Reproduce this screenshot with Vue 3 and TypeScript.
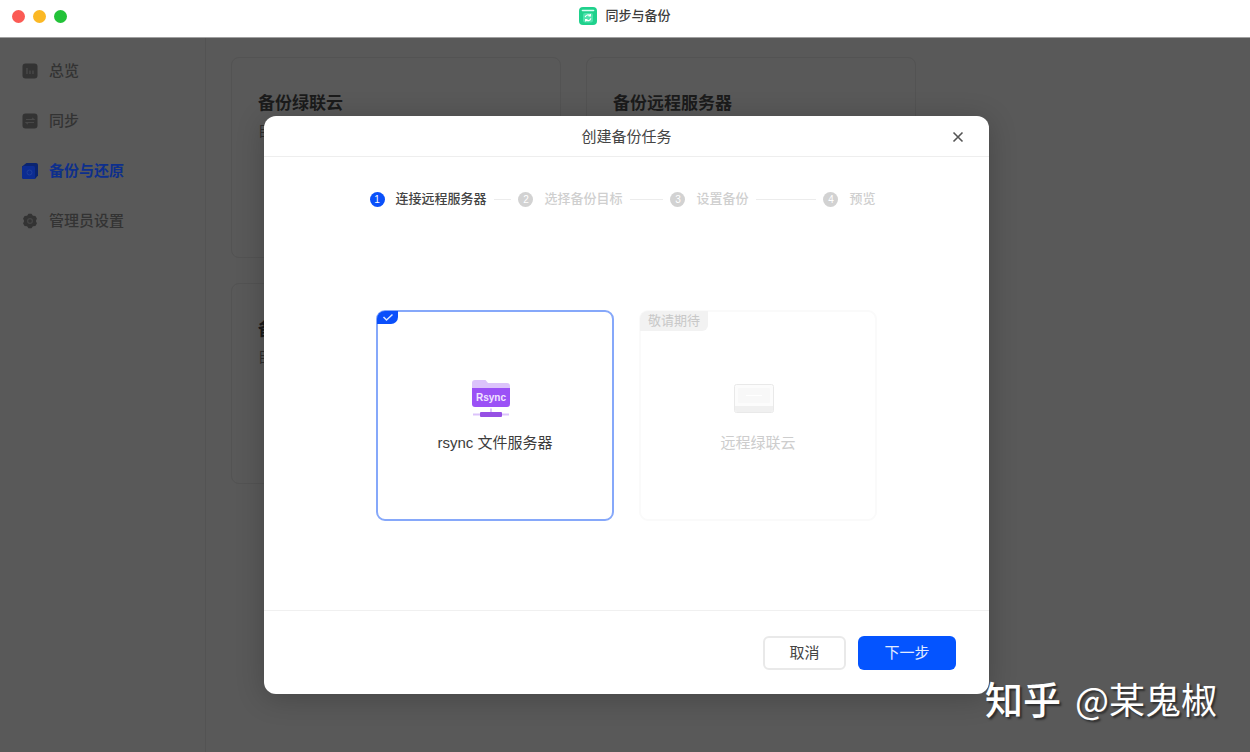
<script setup lang="ts">
import { ref } from 'vue'

interface NavItem { key: string; label: string }
interface Step { no: number; label: string }
interface PlanCard { title: string; note?: string }

const nav: NavItem[] = [
  { key: 'overview', label: '总览' },
  { key: 'sync', label: '同步' },
  { key: 'backup', label: '备份与还原' },
  { key: 'admin', label: '管理员设置' },
]
const activeNav = ref('backup')

const plans: PlanCard[] = [
  { title: '备份绿联云', note: '目' },
  { title: '备份远程服务器' },
  { title: '备份', note: '目' },
]

const steps: Step[] = [
  { no: 1, label: '连接远程服务器' },
  { no: 2, label: '选择备份目标' },
  { no: 3, label: '设置备份' },
  { no: 4, label: '预览' },
]
const currentStep = ref(1)
const target = ref('rsync')
</script>

<template>
  <div class="window">
    <header class="titlebar">
      <div class="lights">
        <button class="light red" type="button" aria-label="关闭窗口"></button>
        <button class="light yellow" type="button" aria-label="最小化"></button>
        <button class="light green" type="button" aria-label="缩放"></button>
      </div>
      <div class="app-name">
        <svg width="18" height="18" viewBox="0 0 18 18" aria-hidden="true">
          <rect width="18" height="18" rx="4" fill="#1fd18c" />
          <path d="M3.500 3.500h11" stroke="#d5fff0" stroke-width="1.600" stroke-linecap="round" />
          <rect x="4" y="6" width="10" height="9.500" rx="2" fill="#4fe3ad" />
          <path d="M6.200 10.200a2.900 2.900 0 0 1 5-1.300M11.800 11.300a2.900 2.900 0 0 1-5 1.400M11.400 7v2H9.500M6.600 14.600v-2h1.900" fill="none" stroke="#fff" stroke-width="1.200" />
        </svg>
        <span>同步与备份</span>
      </div>
    </header>

    <div class="workspace">
      <nav class="sidebar">
        <a
          v-for="item in nav"
          :key="item.key"
          href="#"
          class="nav-item"
          :class="{ active: item.key === activeNav }"
          @click.prevent="activeNav = item.key"
        >
          <svg v-if="item.key === 'overview'" width="16" height="16" viewBox="0 0 16 16" aria-hidden="true">
            <rect x="0.5" y="0.5" width="15" height="15" rx="3" fill="currentColor" />
            <path d="M5 5v6M8 7.5V11M11 7.5V11" stroke="#4c4c4c" stroke-width="1.2" />
          </svg>
          <svg v-else-if="item.key === 'sync'" width="16" height="16" viewBox="0 0 16 16" aria-hidden="true">
            <rect x="0.5" y="0.5" width="15" height="15" rx="3" fill="currentColor" />
            <path d="M4 6.5h8L10 4.8M12 9.5H4l2 1.7" fill="none" stroke="#484848" stroke-width="1.1" />
          </svg>
          <svg v-else-if="item.key === 'backup'" width="16" height="16" viewBox="0 0 16 16" aria-hidden="true">
            <path d="M4.5 0H14a2 2 0 0 1 2 2v10.5L13 16H2a2 2 0 0 1-2-2V3.500Z" fill="#0a2470" />
            <path d="M2 3h9.500a1.500 1.500 0 0 1 1.500 1.500V16H2a2 2 0 0 1-2-2V5a2 2 0 0 1 2-2Z" fill="#0c2c92" />
            <circle cx="7.500" cy="9.500" r="2.500" fill="none" stroke="#203f9c" stroke-width="1" />
          </svg>
          <svg v-else width="16" height="16" viewBox="0 0 16 16" aria-hidden="true">
            <path d="M6.500.8h3l1.400 2 2.500.2 1.500 2.600-1 2.400 1 2.400-1.500 2.600-2.500.2-1.400 2h-3l-1.400-2-2.500-.2L1.100 10.400l1-2.400-1-2.400L2.600 3l2.500-.2Z" fill="currentColor" />
            <circle cx="8" cy="8" r="2.400" fill="none" stroke="#464646" stroke-width="1.200" />
          </svg>
          <span>{{ item.label }}</span>
        </a>
      </nav>

      <main class="content">
        <section v-for="plan in plans" :key="plan.title" class="plan">
          <h2>{{ plan.title }}</h2>
          <p v-if="plan.note">{{ plan.note }}</p>
        </section>
      </main>
    </div>

    <div class="overlay">
      <div class="dialog" role="dialog" aria-labelledby="dialog-title">
        <div class="dialog-head">
          <h1 id="dialog-title">创建备份任务</h1>
          <button class="close" type="button" aria-label="关闭">
            <svg width="12" height="12" viewBox="0 0 12 12" aria-hidden="true">
              <path d="M1.500 1.500l9 9M10.500 1.500l-9 9" stroke="#555" stroke-width="1.600" />
            </svg>
          </button>
        </div>

        <div class="dialog-body">
          <ol class="steps">
            <li v-for="step in steps" :key="step.no" class="step" :class="{ current: step.no === currentStep }">
              <span class="dot">{{ step.no }}</span>
              <span class="step-label">{{ step.label }}</span>
              <span v-if="step.no < steps.length" class="line"></span>
            </li>
          </ol>

          <div class="targets">
            <label class="target" :class="{ selected: target === 'rsync' }">
              <input v-model="target" type="radio" name="target" value="rsync" />
              <span class="check">
                <svg width="12" height="9" viewBox="0 0 12 9" aria-hidden="true">
                  <path d="M1.500 4l3 3 6-5.500" fill="none" stroke="#d9e5ff" stroke-width="1.500" />
                </svg>
              </span>
              <svg width="48" height="40" viewBox="0 0 48 40" aria-hidden="true">
                <path d="M1 4a3 3 0 0 1 3-3h10.500l2.500 3H36a3 3 0 0 1 3 3v6H1Z" fill="#dcc3fb" />
                <path d="M1 9h38v16a3 3 0 0 1-3 3H4a3 3 0 0 1-3-3Z" fill="#9b51f6" />
                <path d="M20 29.500v4M2 35.500h36" stroke="#dcc3fb" stroke-width="2" />
                <rect x="9" y="33" width="22" height="5" rx="1" fill="#9650e4" />
                <text x="20" y="22" text-anchor="middle" class="folder-text">Rsync</text>
              </svg>
              <span class="target-name">rsync 文件服务器</span>
            </label>

            <label class="target disabled">
              <input v-model="target" type="radio" name="target" value="cloud" disabled />
              <span class="tag">敬请期待</span>
              <svg width="48" height="40" viewBox="0 0 48 40" aria-hidden="true">
                <rect x="0.500" y="5.500" width="39" height="28" rx="2" fill="#fcfcfc" stroke="#e9e9e9" />
                <rect x="4" y="9" width="32" height="15" rx="1" fill="#f8f8f8" />
                <path d="M12 16.500h16" stroke="#fff" stroke-width="1" />
                <path d="M1 27h38v4a2 2 0 0 1-2 2H3a2 2 0 0 1-2-2Z" fill="#f0f0f0" />
              </svg>
              <span class="target-name">远程绿联云</span>
            </label>
          </div>
        </div>

        <div class="dialog-foot">
          <button class="btn" type="button">取消</button>
          <button class="btn primary" type="button">下一步</button>
        </div>
      </div>
    </div>

    <div class="watermark"><strong>知乎</strong><span>@某鬼椒</span></div>
  </div>
</template>

<style>
body {
  margin: 0;
}
</style>

<style scoped>
* {
  box-sizing: border-box;
}

.window {
  position: relative;
  display: flex;
  flex-direction: column;
  min-height: 100vh;
  overflow: hidden;
  background: #595959;
  font-family: "Liberation Sans", "Noto Sans CJK SC", sans-serif;
  color: #444;
}

button {
  font-family: inherit;
  padding: 0;
  border: 0;
  cursor: pointer;
}

.titlebar {
  display: grid;
  grid-template-columns: 1fr auto 1fr;
  align-items: center;
  height: 38px;
  padding: 0 12px 5px;
  background: #fff;
  border-bottom: 1px solid #a0a0a0;
}

.lights {
  display: flex;
  gap: 8px;
}

.light {
  width: 13px;
  height: 13px;
  border-radius: 50%;
}

.red { background: #fb5a54; }
.yellow { background: #fbb824; }
.green { background: #22c238; }

.app-name {
  display: flex;
  align-items: center;
  gap: 8px;
  font-size: 13px;
  line-height: 20px;
  font-weight: 500;
  color: #3c3c3c;
}

.workspace {
  display: flex;
  flex: 1;
}

.sidebar {
  display: flex;
  flex-direction: column;
  flex: none;
  gap: 28px;
  width: 206px;
  padding: 22px;
  border-right: 1px solid #535353;
}

.nav-item {
  display: flex;
  align-items: center;
  gap: 11px;
  font-size: 15px;
  line-height: 22px;
  font-weight: 500;
  color: #333;
  text-decoration: none;
}

.nav-item.active {
  color: #0d2f8c;
  font-weight: 700;
}

.content {
  display: grid;
  grid-template-columns: repeat(auto-fill, 330px);
  grid-auto-rows: 201px;
  align-content: start;
  gap: 25px;
  flex: 1;
  padding: 19px 25px;
}

.plan {
  padding: 33px 26px;
  border: 1px solid #535353;
  border-radius: 8px;
}

.plan h2 {
  margin: 0;
  font-size: 17px;
  line-height: 26px;
  font-weight: 700;
  color: #1b1b1b;
}

.plan p {
  margin: 4px 0 0;
  font-size: 14px;
  line-height: 20px;
  color: #2f2f2f;
}

.overlay {
  position: absolute;
  inset: 0;
  display: grid;
  place-items: center;
  padding: 58px 0 0 3px;
}

.dialog {
  width: 58vw;
  min-width: 560px;
  background: #fff;
  border-radius: 12px;
  box-shadow: 0 4px 28px rgba(0, 0, 0, 0.22);
}

.dialog-head {
  display: grid;
  grid-template-columns: 1fr auto 1fr;
  align-items: center;
  padding: 10px 22px 8px;
  border-bottom: 1px solid #eee;
}

.dialog-head h1 {
  grid-column: 2;
  margin: 0;
  font-size: 15px;
  line-height: 22px;
  font-weight: 400;
  color: #444;
}

.close {
  display: grid;
  place-items: center;
  justify-self: end;
  width: 18px;
  height: 18px;
  background: none;
}

.dialog-body {
  display: flex;
  flex-direction: column;
  align-items: center;
  padding: 31px 24px 89px;
}

.steps {
  display: grid;
  grid-template-columns: 149fr 152fr 153fr auto;
  width: 100%;
  max-width: 514px;
  margin: 0 0 100px;
  padding: 0 8px 0 0;
  list-style: none;
}

.step {
  display: flex;
  align-items: center;
  font-size: 13px;
  line-height: 22px;
  font-weight: 500;
  color: #cfcfcf;
  white-space: nowrap;
}

.dot {
  flex: none;
  width: 15px;
  margin-right: 11px;
  border-radius: 50%;
  background: #d2d2d2;
  color: #fff;
  font-size: 10px;
  line-height: 15px;
  text-align: center;
}

.line {
  flex: 1;
  height: 1px;
  margin: 0 7px;
  background: #ececec;
}

.step.current {
  color: #444;
}

.step.current .dot {
  background: #0a50fa;
}

.targets {
  display: flex;
  gap: 25px;
}

.target {
  position: relative;
  display: flex;
  flex-direction: column;
  align-items: center;
  width: 238px;
  height: 211px;
  padding-top: 67px;
  border: 2px solid #fafafa;
  border-radius: 9px;
  cursor: pointer;
}

.target.selected {
  border-color: #86a8fa;
}

.target input {
  position: absolute;
  opacity: 0;
}

.target-name {
  margin-top: 13px;
  font-size: 15px;
  line-height: 22px;
  color: #3c3c3c;
}

.disabled .target-name {
  color: #cdcdcd;
}

.check {
  position: absolute;
  top: -1px;
  left: -1px;
  display: grid;
  place-items: center;
  width: 21px;
  height: 13px;
  border-radius: 8px 0 7px 0;
  background: #0a4ffb;
}

.tag {
  position: absolute;
  top: -1px;
  left: -1px;
  padding: 0 8px;
  border-radius: 8px 0 6px 0;
  background: #f2f2f2;
  font-size: 13px;
  line-height: 20px;
  color: #c8c8c8;
}

.folder-text {
  font-size: 10px;
  font-weight: 700;
  fill: #f1e4ff;
}

.dialog-foot {
  display: flex;
  justify-content: flex-end;
  gap: 12px;
  padding: 25px 33px 24px;
  border-top: 1px solid #f0f0f0;
}

.btn {
  width: 83px;
  height: 34px;
  padding-bottom: 3px;
  border: 2px solid #e9e9e9;
  border-radius: 6px;
  background: #fff;
  font-size: 15px;
  color: #444;
}

.btn.primary {
  width: 98px;
  border: 0;
  background: #0454ff;
  color: #e3ecff;
}

.watermark {
  position: absolute;
  right: 33px;
  bottom: 27px;
  display: flex;
  align-items: baseline;
  gap: 14px;
  font-family: "Noto Sans CJK SC", sans-serif;
  font-size: 36px;
  line-height: 54px;
  color: #fff;
  text-shadow: 2px 2px 2px rgba(0, 0, 0, 0.5);
}

.watermark strong {
  font-size: 38px;
  font-weight: 500;
}
</style>
